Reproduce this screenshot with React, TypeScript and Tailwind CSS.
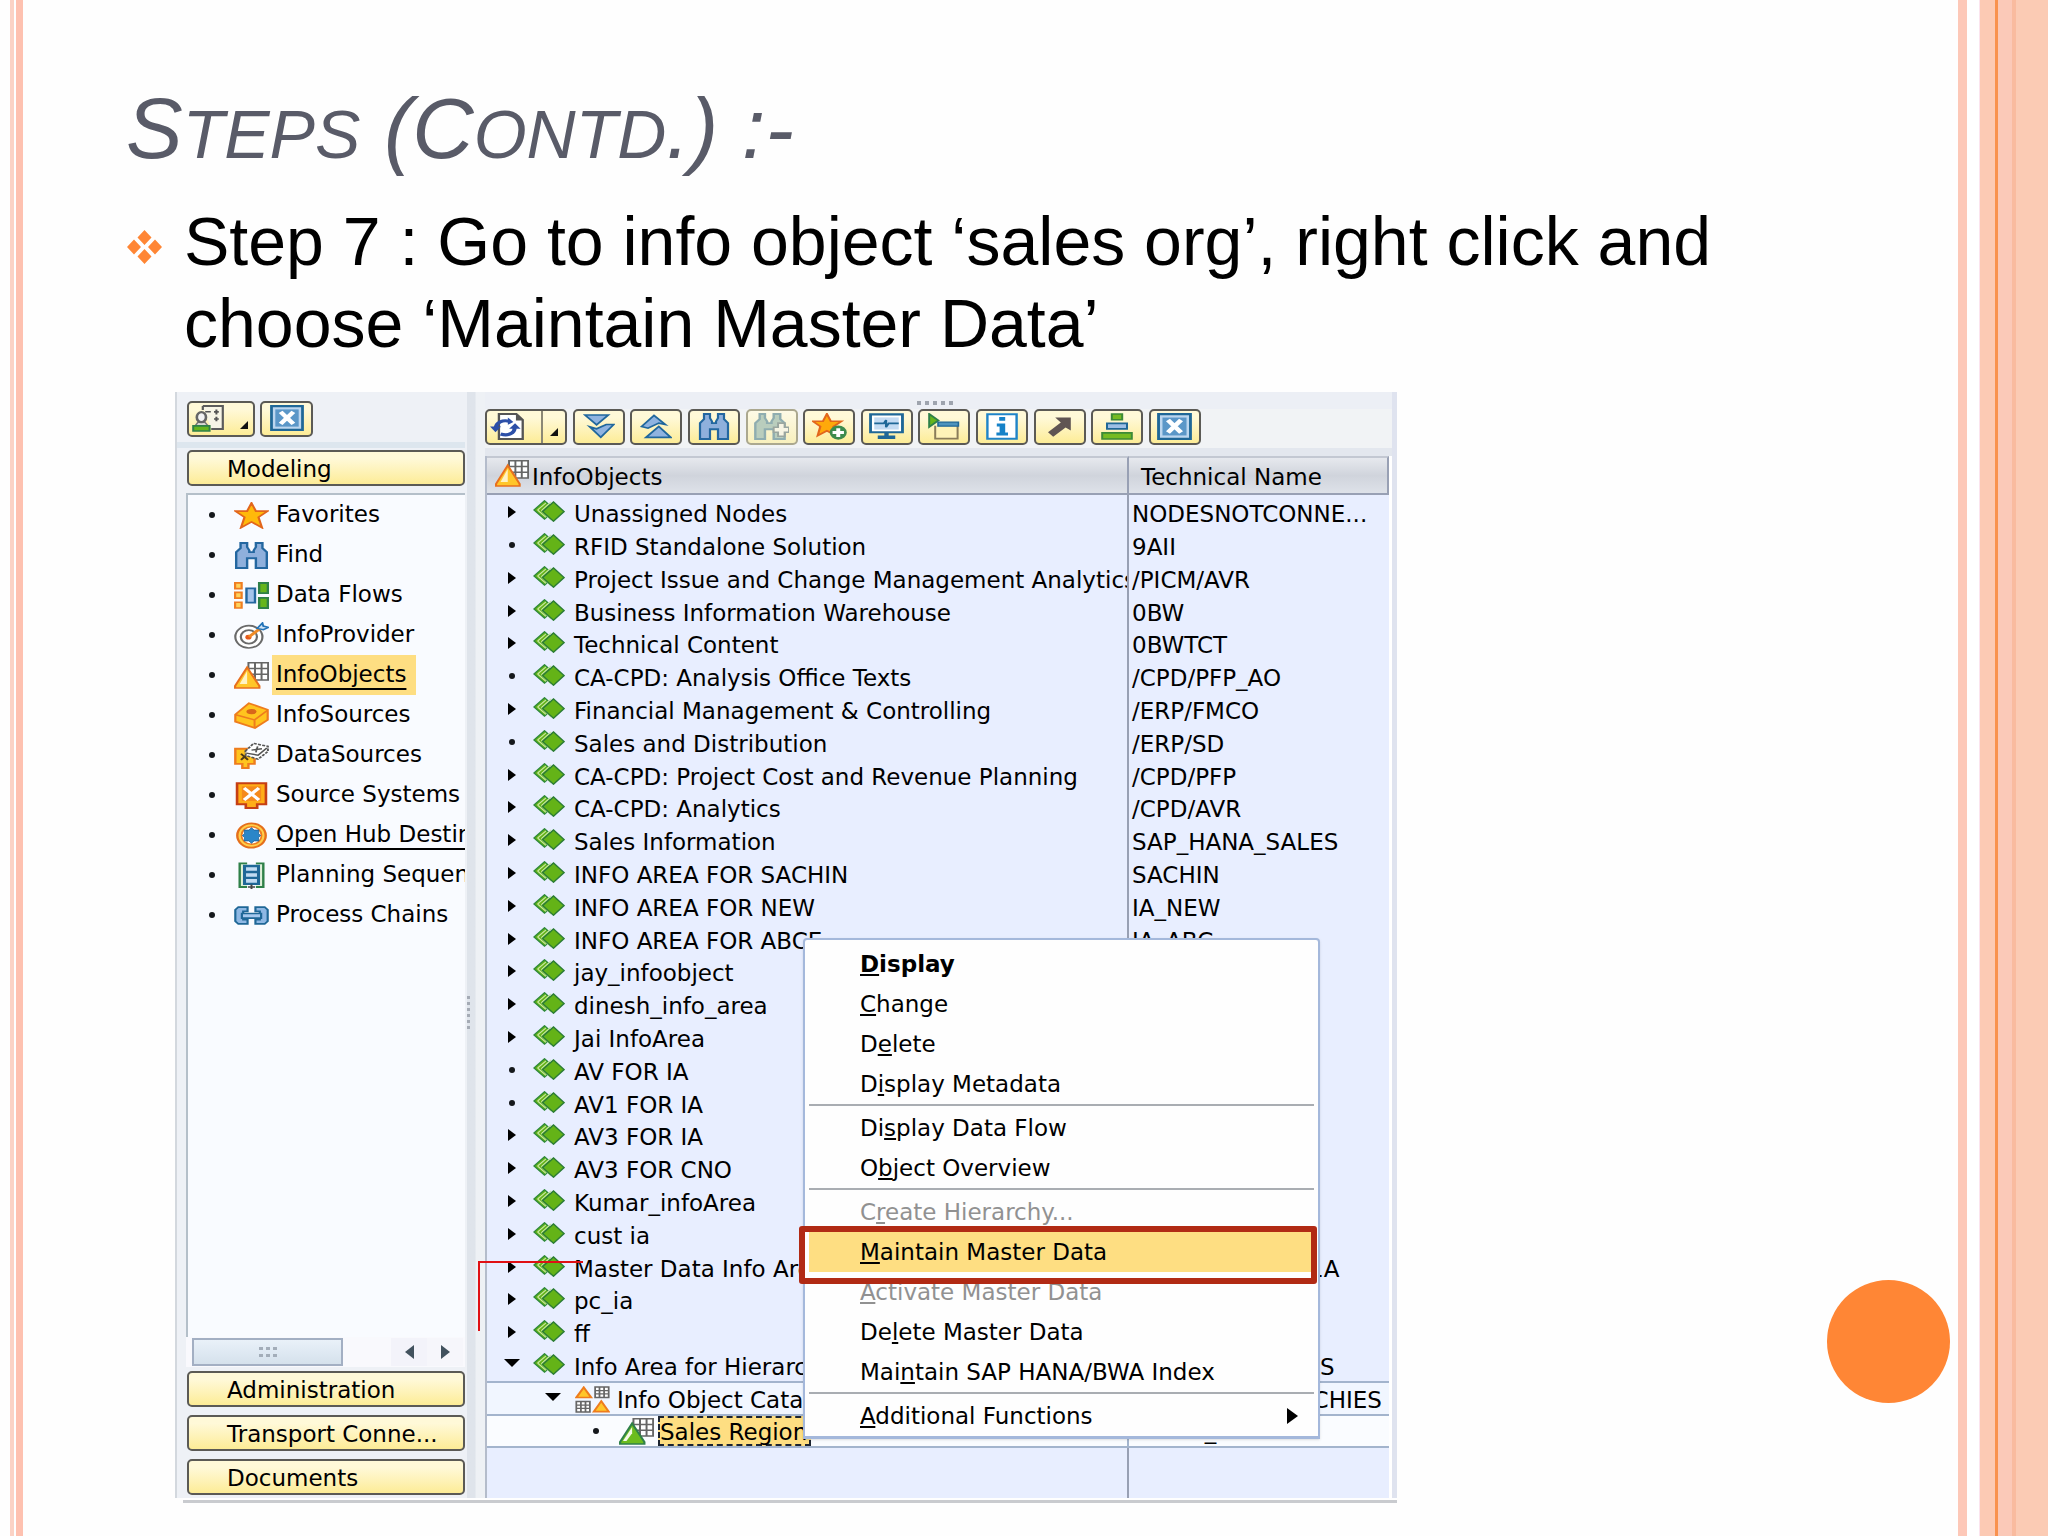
import React from "react";

type IconProps = { name: string; className?: string };

const shapes: Record<string, React.ReactNode> = {
  star: (
    <path d="M8 .6 10 5.4H15.4L11.2 9 12.8 15.2 8 11.8 3.2 15.2 4.8 9 .6 5.4H6Z" fill="#ffb90a" stroke="#e2661c" strokeWidth="1" />
  ),
  starAdd: (
    <>
      <path d="M6.8.5 8.6 4.9H13.4L9.8 8 11 13.4 6.8 10.6 2.6 13.4 3.8 8 .4 4.9H5Z" fill="#ffa90a" stroke="#e2661c" strokeWidth="1" />
      <ellipse cx="12" cy="11.6" rx="3.9" ry="4.2" fill="#3d8b4d" />
      <path d="M12 9v5.2M9.4 11.6h5.2" stroke="#fff" strokeWidth="1.8" />
    </>
  ),
  find: (
    <path d="M3 .6H6V3L7 5V6H9V5L10 3V.6H13V3.6L15 6V15.4H10V9.6H6V15.4H1V6L3 3.6Z" fill="#8fb0dc" stroke="#2467a0" strokeWidth="1.1" />
  ),
  findNext: (
    <>
      <path d="M2.6 .6H5V3L6 5V6H8V5L9 3V.6H12V3.6L14 6V15.4H9V9.6H5V15.4H.6V6L2.6 3.6Z" fill="#b9cdbd" stroke="#8fadb0" strokeWidth="1.1" />
      <path d="M11 6h3v2.4h2v3h-2v2.4h-3v-2.4H9v-3h2Z" fill="#f7f5e4" stroke="#9aa69f" strokeWidth=".9" />
    </>
  ),
  flows: (
    <>
      <g fill="#ffd25a" stroke="#ef7d22" strokeWidth="1">
        <path d="M.5.5h3v3.4h-3ZM.5 6.1h3v3.4h-3ZM.5 12h3v3.4h-3Z" />
      </g>
      <path d="M5.7 3.8h3.9v8.4H5.7Z" fill="#a6c4ec" stroke="#2467a0" strokeWidth="1.1" />
      <path d="M11.5.6h4v6h-4ZM11.5 9.4h4v6h-4Z" fill="#66b51c" stroke="#2f8049" strokeWidth="1.1" />
    </>
  ),
  provider: (
    <>
      <g fill="none" stroke="#6a6a6a" strokeWidth="1">
        <ellipse cx="6.8" cy="8.8" rx="6.2" ry="6.6" fill="#fff" />
        <ellipse cx="6.8" cy="8.8" rx="3.7" ry="4" />
      </g>
      <circle cx="6.6" cy="9" r="1.4" fill="#e55a1c" />
      <path d="M6.8 8.8 11.6 4.2" stroke="#f08a24" strokeWidth="1.6" />
      <path d="M10.6 3.8 13 .6 13.4 2.4 15.8 3.2 13.4 4.6Z" fill="#cfe3f5" stroke="#2373b8" strokeWidth=".9" />
    </>
  ),
  objects: (
    <>
      <path d="M6.6.5h9v10.2h-9ZM9.6.5v10.2M12.6.5v10.2M6.6 3.9h9M6.6 7.3h9" fill="#fff" stroke="#666" strokeWidth=".9" />
      <path d="M6 3.2 11.6 14.2V15.4H.5V14.2Z" fill="#ffc62a" stroke="#e8701e" strokeWidth="1" />
      <path d="M6 5.4V13H2.6Z" fill="#fff3c4" />
    </>
  ),
  region: (
    <>
      <path d="M6.6.5h9v10.2h-9ZM9.6.5v10.2M12.6.5v10.2M6.6 3.9h9M6.6 7.3h9" fill="#fff" stroke="#666" strokeWidth=".9" />
      <path d="M6 3.2 11.6 14.2V15.4H.5V14.2Z" fill="#6cbc1e" stroke="#2f8049" strokeWidth="1" />
      <path d="M6 5.4V9L3.4 13.6H1.8Z" fill="#f4fae8" />
    </>
  ),
  catalog: (
    <>
      <path d="M4 .8 7.4 6.8H.6ZM12 9 15.4 15.2H8.6Z" fill="#ffc62a" stroke="#ee7c1e" strokeWidth="1" />
      <path d="M9.2.6h6.2v6.2H9.2ZM11.2.6v6.2M13.3.6v6.2M9.2 2.7h6.2M9.2 4.7h6.2" fill="#fff" stroke="#666" strokeWidth=".8" />
      <path d="M.6 9.2h6.2v6.2H.6ZM2.7 9.2v6.2M4.8 9.2v6.2M.6 11.3h6.2M.6 13.3h6.2" fill="#fff" stroke="#666" strokeWidth=".8" />
    </>
  ),
  sources: (
    <>
      <path d="M.6 7.4 6.8.7 15.4 4.6V10.6L9.6 15.4.6 11.6Z" fill="#ffc41e" stroke="#ee7c1e" strokeWidth="1" />
      <path d="M.8 7.6 9.4 10.6 15.2 5M9.4 10.6V15.2" fill="none" stroke="#ee7c1e" strokeWidth=".9" />
      <ellipse cx="8" cy="5.7" rx="2.3" ry="1.6" fill="#d9661a" />
    </>
  ),
  dataSources: (
    <>
      <path d="M.6 4H9.4V13H6.6V15.4H3.8V13H.6Z" fill="#ffc41e" stroke="#ee7c1e" strokeWidth="1.1" />
      <path d="M3.2 7 6.4 10.6M6.4 7 3.2 10.6" stroke="#4b3a18" strokeWidth="1" />
      <path d="M5.2 5.4 9 .8 15.5 2.6V5.6L11 10.2 5.4 8Z" fill="#fff" stroke="#555" strokeWidth=".9" strokeDasharray="1.4 .6" />
      <path d="M8 4.8 12.8 4M10.8 2.6 10 6.2M5.6 6.6 11 7.8 15 3.6" fill="none" stroke="#555" strokeWidth=".8" />
    </>
  ),
  systems: (
    <>
      <path d="M1.4.7H14.6V13.2H10.6V15.4H5.4V13.2H1.4Z" fill="#ffad18" stroke="#c63f14" strokeWidth="1.2" />
      <path d="M3.6 2.6H12.4V11.2H3.6Z" fill="#f58a1c" />
      <path d="M4.6 3.6 11.4 10.6M11.4 3.6 4.6 10.6" stroke="#fff" strokeWidth="1.7" />
    </>
  ),
  hub: (
    <>
      <ellipse cx="8" cy="8" rx="6.5" ry="7.2" fill="#ffcf4a" stroke="#e56f1c" strokeWidth="1.1" />
      <ellipse cx="8" cy="8" rx="4.6" ry="5.2" fill="#fff" stroke="#ee7c1e" strokeWidth=".8" />
      <path d="M8 3.4 9.2 4.8 11.4 4.8 11.2 7 12.2 8 11.2 9.2 11.4 11.2 9.2 11.2 8 12.6 6.8 11.2 4.6 11.2 4.8 9.2 3.8 8 4.8 7 4.6 4.8 6.8 4.8Z" fill="#2b86c8" stroke="#1c5f95" strokeWidth=".4" />
    </>
  ),
  planning: (
    <>
      <path d="M6 .8H2.6V14.8H6M10 .8H13.4V14.8H10" fill="#dff0d8" stroke="#2f8049" strokeWidth="1.1" />
      <path d="M4.8 2.4H11.2V13H4.8ZM4.8 5.9H11.2M4.8 9.4H11.2" fill="#c2dbf2" stroke="#1f6797" strokeWidth="1.4" />
      <path d="M8 13.4V16M6.4 14.8H9.6" stroke="#444" strokeWidth=".9" />
    </>
  ),
  chains: (
    <>
      <path d="M2 3H6.2V5.6H4.2V10.4H6.2V13H2L.6 11.4V4.6ZM14 3H9.8V5.6H11.8V10.4H9.8V13H14L15.4 11.4V4.6Z" fill="#8fb8e4" stroke="#1f6797" strokeWidth="1" />
      <path d="M3.6 6.8H12.4V9.6H3.6Z" fill="#a6c8ee" stroke="#1f6797" strokeWidth="1" />
    </>
  ),
  user: (
    <>
      <path d="M5.4.6H15.4V14.2H9.6M5.4.6V3" fill="#f7f5e6" stroke="#5c5c5c" strokeWidth="1.1" />
      <path d="M6.6 4H9.4M12.2 2.6V5.6M11 4.1H13.4M12.2 7V9.6M11 8.3H13.4" stroke="#555" strokeWidth="1" />
      <path d="M1.6 12.4 3 10.2H6.4L8 12.4Z" fill="#d9d9d4" stroke="#777" strokeWidth=".8" />
      <ellipse cx="4.7" cy="7.2" rx="2.3" ry="3" fill="#f3f3f3" stroke="#666" strokeWidth="1.3" />
      <path d="M.6 12.4H8.8V15.4H.6Z" fill="#66b51c" stroke="#2f8049" strokeWidth="1" />
    </>
  ),
  close: (
    <>
      <path d="M.7.7H15.3V15.3H.7Z" fill="#bcd6ef" stroke="#1f6797" strokeWidth="1.3" />
      <path d="M2.5 2.7H13.5V13.3H2.5Z" fill="#5b97c8" />
      <path d="M5 4.2 11 11.6M11 4.2 5 11.6" stroke="#fff" strokeWidth="2.3" />
    </>
  ),
  refresh: (
    <>
      <path d="M4.2.6H12.4L15.4 4V15.4H4.2Z" fill="#fff" stroke="#555" strokeWidth="1.1" />
      <path d="M12.2.6 15.6 4.4H12.2Z" fill="#555" />
      <path d="M2.6 9.4C2.8 5.4 6 3.8 9.4 5" fill="none" stroke="#2c4fa8" strokeWidth="1.9" />
      <path d="M0 8H5.2L2.6 11.4Z" fill="#2c4fa8" />
      <path d="M11.6 8.2C11.8 12 8.6 13.8 5 12.4" fill="none" stroke="#2c4fa8" strokeWidth="1.9" />
      <path d="M9 9.4 11.8 6 14.4 9.4ZM8.4 2.6 11 5.4 8.4 7Z" fill="#2c4fa8" />
    </>
  ),
  expand: (
    <>
      <path d="M1 1.2H12.6L6.8 7Z" fill="#8fb3e0" stroke="#20679d" strokeWidth="1" />
      <path d="M3.4 8.2 6.8 9.4 11.6 6.8H15.4L8.9 14.4Z" fill="#8fb3e0" stroke="#20679d" strokeWidth="1" />
    </>
  ),
  collapse: (
    <>
      <path d="M.8 8 7 1.4 12.6 6.8 9.4 6 4 9Z" fill="#8fb3e0" stroke="#20679d" strokeWidth="1" />
      <path d="M3 14.4 9.4 8 15.4 14.4Z" fill="#8fb3e0" stroke="#20679d" strokeWidth="1" />
    </>
  ),
  monitor: (
    <>
      <path d="M.7.8H15.3V11.4H.7Z" fill="#fff" stroke="#1f6797" strokeWidth="1.3" />
      <path d="M2.4 2.6H13.6V9.8H2.4Z" fill="#c4dbf3" />
      <path d="M2.4 6.2H6.8L7.8 4.2V8.4L9 6.2H13.6" fill="none" stroke="#1f6797" strokeWidth="1" />
      <path d="M7 11.6H9V13.4H12V15.4H4V13.4H7Z" fill="#1f6797" />
    </>
  ),
  open: (
    <>
      <path d="M.6.6 5.2 4.4.6 8.2Z" fill="#66b51c" stroke="#2f8049" strokeWidth="1" />
      <path d="M3.6 7.6V15.2H14.8V5.6" fill="#fff3b8" stroke="#8b7d5a" strokeWidth="1" />
      <path d="M5 5.4H15.2V7.8H5Z" fill="#4d93bd" stroke="#1f6797" strokeWidth=".8" />
    </>
  ),
  info: (
    <>
      <path d="M.7.7H15.3V15.3H.7Z" fill="#fff" stroke="#1f84c8" strokeWidth="1.2" />
      <path d="M6.6 2.4H9.6V4.6H6.6ZM5.4 6.2H9.6V11.6H11V13.4H5.2V11.6H6.8V8H5.4Z" fill="#1682c8" />
    </>
  ),
  arrow: <path d="M5.6 2.6H13.4V10.4L10.8 8.6 4.6 14 2 11.4 8.4 5.6Z" fill="#605553" />,
  stack: (
    <>
      <path d="M5.4.6H10.6V4H5.4ZM.6 11.8H15.4V15.4H.6Z" fill="#76bb22" stroke="#3c8b37" strokeWidth="1" />
      <path d="M3 6.2H13V9.4H3Z" fill="#9dbfe6" stroke="#1f6797" strokeWidth="1" />
    </>
  ),
};

function Icon({ name, className = "w-[35px] h-[27px]" }: IconProps) {
  return (
    <svg viewBox="0 0 16 16" preserveAspectRatio="none" aria-hidden="true" className={`block shrink-0 ${className}`}>
      {shapes[name]}
    </svg>
  );
}

function AreaIcon() {
  return (
    <svg viewBox="0 0 32 22" aria-hidden="true" className="block h-[22px] w-8 shrink-0">
      <path d="M1 10 11.5 .8 22 10 11.5 19Z" fill="#64b317" stroke="#2f8a3a" strokeWidth="1.4" />
      <path d="M4.6 10 13 2.8M4.6 10 13 17.4M8.4 10.6 18 2M8.4 10.6 18 20" stroke="#c9e8a8" strokeWidth="1.1" fill="none" />
      <path d="M9.5 11.6 20.5 2 31 11.6 20.5 21.2Z" fill="#64b317" stroke="#2c7d35" strokeWidth="1.4" />
    </svg>
  );
}

function Dot() {
  return <span className="block size-[6px] rounded-full bg-[#15181c]" />;
}

function Expander({ kind }: { kind: string }) {
  if (kind === "dot") return <Dot />;
  if (kind === "down")
    return (
      <svg viewBox="0 0 16 8" aria-hidden="true" className="block h-2 w-4">
        <path d="M0 0H16L8 8Z" fill="#000" />
      </svg>
    );
  return (
    <svg viewBox="0 0 8 12" aria-hidden="true" className="block h-3 w-2">
      <path d="M0 0 8 6 0 12Z" fill="#000" />
    </svg>
  );
}

const yellow = "border-2 border-[#5b5a55] rounded-[5px] bg-linear-to-b from-[#fff9d8] from-20% to-[#fdec96]";

const navItems: { icon: string; label: string; state?: string }[] = [
  { icon: "star", label: "Favorites" },
  { icon: "find", label: "Find" },
  { icon: "flows", label: "Data Flows" },
  { icon: "provider", label: "InfoProvider" },
  { icon: "objects", label: "InfoObjects", state: "selected" },
  { icon: "sources", label: "InfoSources" },
  { icon: "dataSources", label: "DataSources" },
  { icon: "systems", label: "Source Systems" },
  { icon: "hub", label: "Open Hub Destination", state: "underlined" },
  { icon: "planning", label: "Planning Sequence" },
  { icon: "chains", label: "Process Chains" },
];

const tools = [
  ["expand", "Expand all"],
  ["collapse", "Collapse all"],
  ["find", "Find"],
  ["findNext", "Find next"],
  ["starAdd", "Add to favorites"],
  ["monitor", "Monitor"],
  ["open", "Open"],
  ["info", "Information"],
  ["arrow", "Go to"],
  ["stack", "Hierarchy"],
  ["close", "Close"],
];

const areas: [string, string, string][] = [
  ["right", "Unassigned Nodes", "NODESNOTCONNE..."],
  ["dot", "RFID Standalone Solution", "9AII"],
  ["right", "Project Issue and Change Management Analytics", "/PICM/AVR"],
  ["right", "Business Information Warehouse", "0BW"],
  ["right", "Technical Content", "0BWTCT"],
  ["dot", "CA-CPD: Analysis Office Texts", "/CPD/PFP_AO"],
  ["right", "Financial Management & Controlling", "/ERP/FMCO"],
  ["dot", "Sales and Distribution", "/ERP/SD"],
  ["right", "CA-CPD: Project Cost and Revenue Planning", "/CPD/PFP"],
  ["right", "CA-CPD: Analytics", "/CPD/AVR"],
  ["right", "Sales Information", "SAP_HANA_SALES"],
  ["right", "INFO AREA FOR SACHIN", "SACHIN"],
  ["right", "INFO AREA FOR NEW", "IA_NEW"],
  ["right", "INFO AREA FOR ABCE", "IA_ABC"],
  ["right", "jay_infoobject", ""],
  ["right", "dinesh_info_area", ""],
  ["right", "Jai InfoArea", ""],
  ["dot", "AV FOR IA", ""],
  ["dot", "AV1 FOR IA", ""],
  ["right", "AV3 FOR IA", ""],
  ["right", "AV3 FOR CNO", ""],
  ["right", "Kumar_infoArea", ""],
  ["right", "cust ia", ""],
  ["right", "Master Data Info Area", "MASTER_DATA_1A"],
  ["right", "pc_ia", ""],
  ["right", "ff", ""],
  ["down", "Info Area for Hierarchies", "ISA_HIERARCHIES"],
];

type MenuEntry = { pre?: string; key?: string; post?: string; kind?: "bold" | "disabled" | "active" | "submenu" | "separator" };

const menu: MenuEntry[] = [
  { key: "D", post: "isplay", kind: "bold" },
  { key: "C", post: "hange" },
  { pre: "D", key: "e", post: "lete" },
  { pre: "D", key: "i", post: "splay Metadata" },
  { kind: "separator" },
  { pre: "Di", key: "s", post: "play Data Flow" },
  { pre: "O", key: "b", post: "ject Overview" },
  { kind: "separator" },
  { pre: "C", key: "r", post: "eate Hierarchy...", kind: "disabled" },
  { key: "M", post: "aintain Master Data", kind: "active" },
  { key: "A", post: "ctivate Master Data", kind: "disabled" },
  { pre: "De", key: "l", post: "ete Master Data" },
  { pre: "Mai", key: "n", post: "tain SAP HANA/BWA Index" },
  { kind: "separator" },
  { key: "A", post: "dditional Functions", kind: "submenu" },
];

function NavButton({ label }: { label: string }) {
  return (
    <button type="button" className={`${yellow} h-9 w-full truncate pt-[2px] pr-2 pl-[38px] text-left text-[23px] leading-7`}>
      {label}
    </button>
  );
}

function Sidebar() {
  return (
    <aside className="flex w-[292px] shrink-0 flex-col border-l-2 border-[#d3d8de] bg-[#eef1f6] pr-[2px]">
      <div className="flex h-[50px] gap-[5px] pt-[9px] pl-[10px]">
        <button type="button" aria-label="User menu" className={`${yellow} flex h-9 w-[68px] items-start justify-between pt-[2px] pr-[5px] pl-[3px]`}>
          <Icon name="user" className="h-[27px] w-8" />
          <svg viewBox="0 0 8 8" aria-hidden="true" className="mt-4 size-2">
            <path d="M8 0V8H0Z" fill="#111" />
          </svg>
        </button>
        <button type="button" aria-label="Close navigation" className={`${yellow} flex h-9 w-[53px] items-start justify-center pt-[2px]`}>
          <Icon name="close" className="h-[26px] w-[34px]" />
        </button>
      </div>
      <div className="h-[6px] bg-[#dde6ee]" />
      <div className="pt-[2px] pr-0 pl-[10px]">
        <NavButton label="Modeling" />
      </div>
      <nav className="mt-[7px] ml-[9px] flex-1 overflow-hidden border-t-2 border-l-2 border-[#b4bfc9] bg-[#f9fbff]">
        <ul>
          {navItems.map((item) => (
            <li key={item.label} className="flex h-10 items-center">
              <span className="flex w-[46px] shrink-0 justify-center pl-[2px]">
                <Dot />
              </span>
              <Icon name={item.icon} />
              <a
                href="#"
                className={
                  item.state === "selected"
                    ? "ml-[3px] h-10 bg-[#fede82] pt-[5px] pr-[10px] pl-1 text-[23px] leading-7 whitespace-nowrap underline decoration-2 underline-offset-[6px]"
                    : item.state === "underlined"
                      ? "ml-[7px] h-10 pt-[5px] text-[23px] leading-7 whitespace-nowrap underline decoration-2 underline-offset-[6px]"
                      : "ml-[7px] h-10 pt-[5px] text-[23px] leading-7 whitespace-nowrap"
                }
              >
                {item.label}
              </a>
            </li>
          ))}
        </ul>
      </nav>
      <div className="ml-[9px] flex h-[30px] items-center justify-between bg-[#f9f9fd] pr-[2px] pl-[6px]">
        <div className="grid h-7 w-[151px] place-content-center border-2 border-[#a3afc3] bg-linear-to-b from-[#e9f1f9] to-[#d5e1ec]">
          <div className="grid grid-cols-3 gap-x-[3px] gap-y-[4px]">
            {[0, 1, 2, 3, 4, 5].map((n) => (
              <span key={n} className="h-[3px] w-1 bg-[#a3adb9]" />
            ))}
          </div>
        </div>
        <div className="flex">
          <button type="button" aria-label="Scroll left" className="grid h-7 w-9 place-content-center bg-[#f3f3fa]">
            <svg viewBox="0 0 9 14" aria-hidden="true" className="h-[14px] w-[9px]">
              <path d="M9 0V14L0 7Z" fill="#42525e" />
            </svg>
          </button>
          <button type="button" aria-label="Scroll right" className="grid h-7 w-9 place-content-center bg-[#f6f6fb]">
            <svg viewBox="0 0 9 14" aria-hidden="true" className="h-[14px] w-[9px]">
              <path d="M0 0V14L9 7Z" fill="#42525e" />
            </svg>
          </button>
        </div>
      </div>
      <div className="flex flex-col gap-2 pt-1 pb-[3px] pl-[10px]">
        <NavButton label="Administration" />
        <NavButton label="Transport Conne..." />
        <NavButton label="Documents" />
      </div>
    </aside>
  );
}

function InfoTable() {
  const name = "overflow-hidden border-r-2 border-[#98a0b4] p-0";
  const tech = "overflow-hidden p-0 pl-[3px] pt-1 leading-7 whitespace-nowrap";
  return (
    <table className="w-full table-fixed border-separate border-spacing-0 border-l-2 border-[#b4bccb] bg-[#e8eeff] text-left text-[23px]">
      <thead>
        <tr className="h-[39px] bg-linear-to-b from-[#e9ebf0] via-[#d0d4dc] to-[#dfe3ea]">
          <th scope="col" className="overflow-hidden border-t-2 border-r-2 border-b-2 border-t-[#c3c8d2] border-r-[#98a0b4] border-b-[#98a0b4] p-0 font-normal">
            <span className="flex items-center gap-[3px] pl-2">
              <Icon name="objects" className="-mt-1 h-[27px] w-[34px]" />
              <span className="pt-[2px] leading-7">InfoObjects</span>
            </span>
          </th>
          <th scope="col" className="w-[260px] border-t-2 border-r-2 border-b-2 border-t-[#c3c8d2] border-r-[#98a0b4] border-b-[#98a0b4] p-0 pt-[2px] pl-3 leading-7 font-normal">
            Technical Name
          </th>
        </tr>
      </thead>
      <tbody>
        {areas.map(([kind, label, technical], i) => (
          <tr key={label} className={i % 5 === 4 ? "h-8" : "h-[33px]"}>
            <td className={name}>
              <span className="flex items-start pl-4">
                <span className={kind === "down" ? "flex h-7 w-[17px] shrink-0 items-center justify-center" : "flex h-8 w-[17px] shrink-0 items-center justify-center"}>
                  <Expander kind={kind} />
                </span>
                <span className="ml-[13px] pt-1">
                  <AreaIcon />
                </span>
                <span className="ml-[9px] pt-1 leading-7 whitespace-nowrap">{label}</span>
              </span>
            </td>
            <td className={tech}>{technical}</td>
          </tr>
        ))}
        <tr className="h-[33px] bg-[#f1f6ff]">
          <td className="overflow-hidden border-t-2 border-r-2 border-[#a3b4cd] p-0">
            <span className="flex items-start pl-[58px]">
              <span className="flex h-[26px] w-4 shrink-0 items-center">
                <Expander kind="down" />
              </span>
              <Icon name="catalog" className="mt-[2px] ml-[14px] h-[27px] w-[35px]" />
              <span className="ml-[7px] pt-[2px] leading-7 whitespace-nowrap">Info Object Catalog</span>
            </span>
          </td>
          <td className="overflow-hidden border-t-2 border-[#a3b4cd] p-0 pt-[2px] pl-[3px] leading-7 whitespace-nowrap">CATI_IA_HIERARCHIES</td>
        </tr>
        <tr className="h-[34px] bg-[#fafcff]">
          <td className="overflow-hidden border-y-2 border-r-2 border-[#a3b4cd] p-0">
            <span className="flex items-center pl-[106px]">
              <Dot />
              <Icon name="region" className="ml-[20px] h-[27px] w-[35px]" />
              <span className="ml-1 h-[30px] border-2 border-dashed border-[#1c2430] bg-[#fede82] pr-[2px] leading-7 whitespace-nowrap">Sales Region</span>
            </span>
          </td>
          <td className="overflow-hidden border-y-2 border-[#a3b4cd] p-0 pl-[3px] leading-7 whitespace-nowrap">SALES_REG</td>
        </tr>
        <tr className="h-[50px]">
          <td className={name} />
          <td className={tech} />
        </tr>
      </tbody>
    </table>
  );
}

function ContextMenu() {
  return (
    <div role="menu" className="absolute top-[546px] left-[628px] w-[517px] rounded-t-[4px] border-2 border-b-[3px] border-[#a4b8db] bg-[#fefefe] px-1 pt-1 pb-0 text-[23px] shadow-sm">
      {menu.map((m, i) =>
        m.kind === "separator" ? (
          <div key={i} role="separator" className="h-1 border-t-2 border-[#a9adb2]" />
        ) : (
          <button
            key={i}
            type="button"
            role="menuitem"
            disabled={m.kind === "disabled"}
            className={
              m.kind === "bold"
                ? "flex h-10 w-full items-center pl-[51px] leading-7 font-bold"
                : m.kind === "disabled"
                  ? "flex h-10 w-full items-center pl-[51px] leading-7 text-[#919191]"
                  : m.kind === "active"
                    ? "flex h-10 w-full items-center bg-[#fede82] pl-[51px] leading-7"
                    : "flex h-10 w-full items-center pl-[51px] leading-7"
            }
          >
            <span className="whitespace-pre">
              {m.pre}
              <span className="underline decoration-2 underline-offset-2">{m.key}</span>
              {m.post}
            </span>
            {m.kind === "submenu" && (
              <svg viewBox="0 0 11 16" aria-hidden="true" className="mr-4 ml-auto h-4 w-[11px]">
                <path d="M0 0 11 8 0 16Z" fill="#000" />
              </svg>
            )}
          </button>
        ),
      )}
      <div className="pointer-events-none absolute top-[286px] -left-[6px] h-[58px] w-[518px] rounded-[3px] border-[6px] border-[#b12a14]" />
    </div>
  );
}

function Workbench() {
  return (
    <section className="relative mt-7 mr-[561px] ml-[152px] flex flex-col font-['DejaVu_Sans',sans-serif] text-black">
      <div className="flex">
        <Sidebar />
        <div className="flex w-[18px] shrink-0 items-center bg-linear-to-r from-[#dfe4eb] from-45% to-[#eef1f5] to-50%">
          <div className="mt-[134px] flex flex-col gap-[3px]">
            {[0, 1, 2, 3, 4, 5].map((n) => (
              <span key={n} className="size-[3px] bg-[#a5abb5]" />
            ))}
          </div>
        </div>
        <div className="min-w-0 flex-1 border-r-[5px] border-[#dfe3ef] bg-[#e3e7ee]">
          <div className="flex h-[17px] items-center justify-center gap-1 bg-[#eceff5] pt-[5px] pr-[8px]">
            {[0, 1, 2, 3, 4].map((n) => (
              <span key={n} className="size-1 bg-[#9ea4ae]" />
            ))}
          </div>
          <div className="h-[39px] bg-[#f1f3f5]">
            <div className="flex w-[716px] justify-between">
              <button type="button" aria-label="Refresh" className={`${yellow} flex h-9 w-[82px] items-stretch pl-[3px]`}>
                <Icon name="refresh" className="mt-[2px] h-[27px] w-[34px]" />
                <span className="ml-auto flex w-[24px] items-end border-l-2 border-[#8b8875] pb-[7px] pl-[7px]">
                  <svg viewBox="0 0 8 8" aria-hidden="true" className="size-2">
                    <path d="M8 0V8H0Z" fill="#111" />
                  </svg>
                </span>
              </button>
              {tools.map(([icon, label]) => (
                <button
                  key={label}
                  type="button"
                  aria-label={label}
                  className={
                    icon === "findNext"
                      ? "flex h-9 w-[52px] justify-center rounded-[5px] border-2 border-[#aba88f] bg-linear-to-b from-[#fdfae6] to-[#f8f0bd] pt-[2px]"
                      : `${yellow} flex h-9 w-[52px] justify-center pt-[2px]`
                  }
                >
                  <Icon name={icon} className={icon === "starAdd" || icon === "monitor" || icon === "close" || icon === "findNext" ? "h-[27px] w-[35px]" : "h-[27px] w-8"} />
                </button>
              ))}
            </div>
          </div>
          <div className="h-2" />
          <div className="border-r-[3px] border-white">
            <InfoTable />
          </div>
        </div>
      </div>
      <div className="ml-2 h-[5px] border-t-2 border-b-[3px] border-t-white border-b-[#c9cbcf]" />
      <ContextMenu />
      <div className="pointer-events-none absolute top-[869px] left-[303px] h-[70px] w-[105px] border-t-2 border-l-2 border-[#e01014]" />
    </section>
  );
}

export default function App() {
  return (
    <main className="flex h-screen w-full overflow-hidden bg-[#fefefe] font-['Liberation_Sans',Arial,sans-serif]">
      <div className="flex w-[23px] shrink-0 justify-between pl-[10px]">
        <div className="w-1 bg-[#fbd2c5]" />
        <div className="w-[7px] bg-[#fec1b0]" />
      </div>
      <div className="relative min-w-0 flex-1">
        <h1 className="mt-[81px] ml-[103px] text-[85px] leading-[96px] text-[#595b68] italic">
          S<span className="text-[68px] leading-none uppercase">teps</span> (C<span className="text-[68px] leading-none uppercase">ontd</span>.) :-
        </h1>
        <div className="mt-[23px] ml-[104px] flex">
          <svg viewBox="0 0 35 34" aria-hidden="true" className="mt-[30px] h-[34px] w-[35px] shrink-0">
            <path d="M17.5 0 24.5 7.5 17.5 15 10.5 7.5ZM17.5 19 24.5 26.5 17.5 34 10.5 26.5ZM7 9.5 14 17 7 24.5 0 17ZM28 9.5 35 17 28 24.5 21 17Z" fill="#ff8635" />
          </svg>
          <p className="ml-[22px] max-w-[1600px] text-[68px] leading-[82px] text-black">
            Step 7 : Go to info object ‘sales org’, right click and choose ‘Maintain Master Data’
          </p>
        </div>
        <Workbench />
        <div className="absolute right-2 bottom-[133px] size-[123px] rounded-full bg-[#ff8635]" />
      </div>
      <div className="flex w-[90px] shrink-0">
        <div className="w-[9px] bg-[#fdc8b8]" />
        <div className="w-3 bg-white" />
        <div className="w-[1px] bg-[#fbe4ee]" />
        <div className="w-[15px] bg-[#fccab4]" />
        <div className="w-[3px] bg-[#f9924e]" />
        <div className="w-[14px] bg-[#fbc9b8]" />
        <div className="w-1 bg-[#f9bb9f]" />
        <div className="flex-1 bg-[#fbcbb4]" />
      </div>
    </main>
  );
}
